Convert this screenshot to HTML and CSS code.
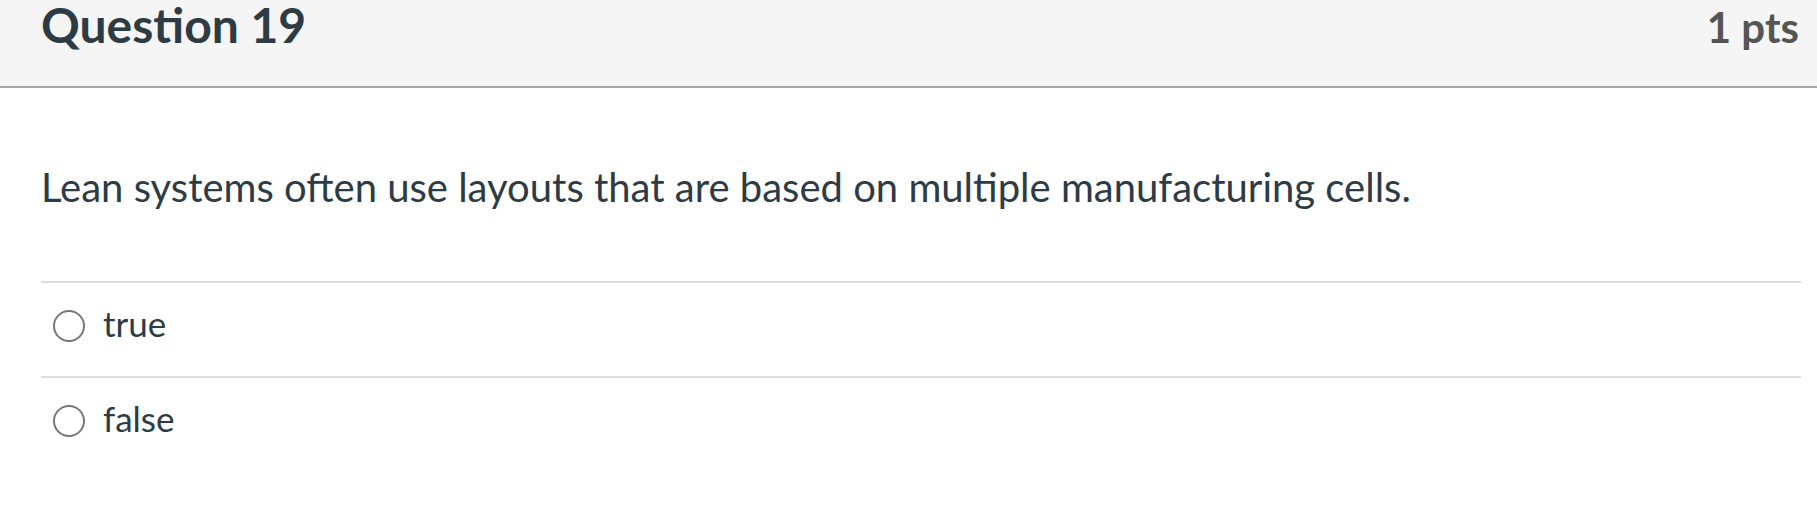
FILE: index.html
```html
<!DOCTYPE html>
<html lang="en">
<head>
<meta charset="utf-8">
<title>Question 19</title>
<link rel="stylesheet" href="styles.css">
</head>
<body>
<div class="question">
  <div class="header">
    <h2 class="title">Question 19</h2>
    <span class="pts">1 pts</span>
  </div>
  <div class="content">
    <p class="text">Lean systems often use layouts that are based on multiple manufacturing cells.</p>
    <div class="answers">
      <label class="answer">
        <span class="radio"></span>
        <span class="label">true</span>
      </label>
      <label class="answer">
        <span class="radio"></span>
        <span class="label">false</span>
      </label>
    </div>
  </div>
</div>
</body>
</html>
```
FILE: styles.css
```css
html, body {
  margin: 0;
  padding: 0;
  background: #ffffff;
}
body {
  font-family: Lato, "Open Sans", sans-serif;
  color: #2d3b45;
}
.header {
  display: flex;
  justify-content: space-between;
  align-items: baseline;
  height: 88px;
  box-sizing: border-box;
  padding: 2px 18px 0 41px;
  background: #f5f5f5;
  border-bottom: 2px solid #a5a5a5;
}
.title {
  margin: 0;
  font-size: 48px;
  font-weight: 700;
  line-height: 46px;
  color: #2d3b45;
}
.pts {
  font-size: 42px;
  font-weight: 700;
  line-height: 46px;
  color: #555555;
}
.content {
  padding: 0 16px 0 41px;
}
.text {
  margin: 79px 0 74px;
  font-size: 40px;
  line-height: 40px;
}
.answer {
  display: flex;
  align-items: flex-start;
  height: 95px;
  box-sizing: border-box;
  border-top: 2px solid #dddddd;
  padding: 20px 0 0 12px;
}
.radio {
  width: 32px;
  height: 32px;
  box-sizing: border-box;
  border: 2.5px solid #777777;
  border-radius: 50%;
  margin-top: 7px;
  flex: none;
}
.label {
  margin: 3px 0 0 18px;
  font-size: 35px;
  line-height: 35px;
}
```
